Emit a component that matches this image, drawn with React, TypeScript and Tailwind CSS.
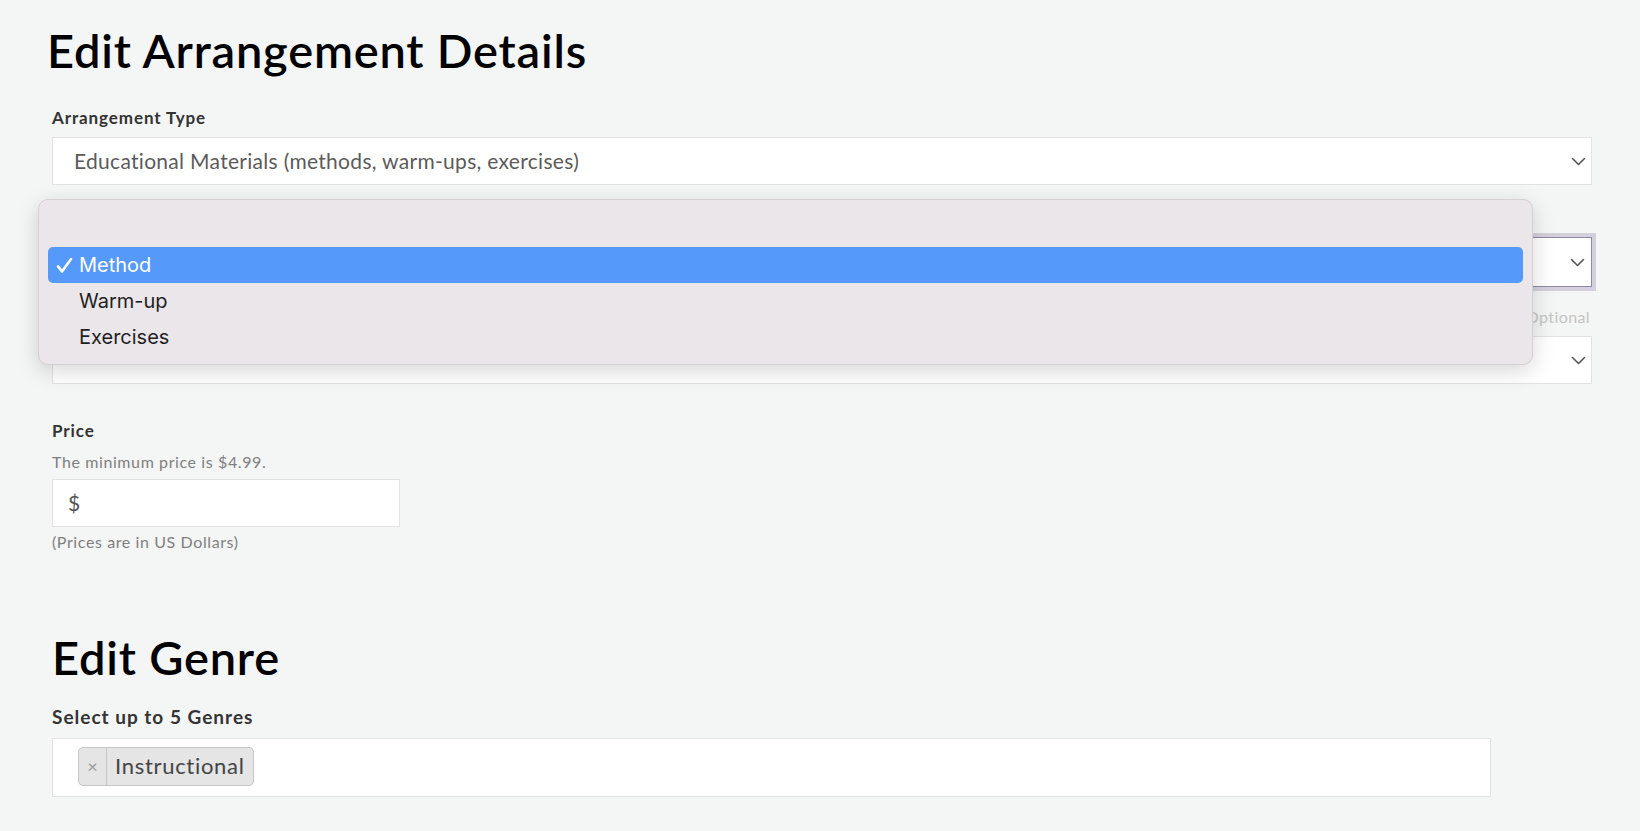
import React from 'react'

const Chevron = () => (
  <svg width="15" height="9" viewBox="0 0 15 9" fill="none" stroke="#555" strokeWidth="1.6" strokeLinecap="round" strokeLinejoin="round">
    <path d="M1.5 1.5l6 6 6-6" />
  </svg>
)

function SelectBox({ value, focused }: { value?: string; focused?: boolean }) {
  return (
    <div
      className={
        focused
          ? 'flex h-[50px] items-center justify-between border border-[#8f89a5] bg-white pl-[21px] pr-[6px] shadow-[0_0_0_4px_#d3cfdc]'
          : 'flex h-[48px] items-center justify-between border border-[#e2e2e2] bg-white pl-[21px] pr-[5px]'
      }
    >
      <span className="text-[21px] tracking-[0.3px] text-[#5b5b5b]">{value}</span>
      <Chevron />
    </div>
  )
}

const options = ['', 'Method', 'Warm-up', 'Exercises']

export default function App() {
  return (
    <div className="relative min-h-screen w-full overflow-hidden bg-[#f4f5f5] font-['Lato','Noto_Sans',sans-serif] text-[#111]">
      <div className="pl-[47px] pt-[22px]">
        <h1 className="text-[47px] font-semibold leading-[56px] tracking-[0.8px] text-black">Edit Arrangement Details</h1>
      </div>

      <div className="w-[1592px] pl-[52px]">
        <div className="mt-[30px]">
          <label className="block text-[17px] font-bold leading-[20px] tracking-[0.9px] text-[#333]">Arrangement Type</label>
          <div className="mt-[9px]">
            <SelectBox value="Educational Materials (methods, warm-ups, exercises)" />
          </div>
        </div>

        <div className="mt-[23px]">
          <div className="h-[20px]" />
          <div className="mt-[9px]">
            <SelectBox focused />
          </div>
        </div>

        <div className="mt-[20px]">
          <div className="flex h-[20px] items-end justify-end">
            <span className="pr-[2px] text-[16px] leading-[20px] tracking-[0.4px] text-[#c4c4c4]">Optional</span>
          </div>
          <div className="mt-[9px]">
            <SelectBox />
          </div>
        </div>

        <div className="mt-[37px]">
          <label className="block text-[17px] font-bold leading-[20px] tracking-[0.9px] text-[#333]">Price</label>
          <p className="mt-[11px] text-[16px] leading-[20px] tracking-[0.6px] text-[#808080]">The minimum price is $4.99.</p>
          <div className="mt-[7px] flex h-[48px] w-[348px] items-center border border-[#e2e2e2] bg-white pl-[15px]">
            <span className="text-[21px] text-[#555]">$</span>
          </div>
          <p className="mt-[5px] text-[16px] leading-[20px] tracking-[0.6px] text-[#808080]">(Prices are in US Dollars)</p>
        </div>

        <h2 className="mt-[77px] text-[47px] font-semibold leading-[56px] tracking-[0.8px] text-black">Edit Genre</h2>

        <div className="mt-[22px]">
          <label className="block text-[19px] font-bold leading-[20px] tracking-[1px] text-[#333]">Select up to 5 Genres</label>
          <div className="mt-[11px] flex h-[59px] w-[1439px] items-start border border-[#e2e2e2] bg-white pl-[25px] pt-[8px]">
            <div className="flex h-[39px] items-stretch rounded-[5px] border border-[#c6c6c6] bg-[#e5e5e5]">
              <span className="flex w-[28px] items-center justify-center border-r border-[#c6c6c6] pb-[1px] text-[18px] text-[#999]">×</span>
              <span className="flex items-center pb-[3px] pl-[8px] pr-[8px] text-[22px] tracking-[0.7px] text-[#444]">Instructional</span>
            </div>
          </div>
        </div>
      </div>

      <div className="absolute left-[38px] top-[199px] w-[1495px] rounded-[10px] border border-[#d3cfd2] bg-[#ebe6e9] px-[9px] pb-[9px] pt-[11px] font-['Inter','Noto_Sans',sans-serif] shadow-[0_6px_22px_rgba(0,0,0,0.16)]">
        {options.map((opt, i) => (
          <div
            key={i}
            className={
              opt === 'Method'
                ? 'flex h-[36px] items-center rounded-[5px] bg-[#5599fb] text-white'
                : 'flex h-[36px] items-center text-[#1f1f1f]'
            }
          >
            <span className="flex w-[31px] justify-center pl-[1px]">
              {opt === 'Method' && (
                <svg width="17" height="17" viewBox="0 0 17 17" fill="none" stroke="white" strokeWidth="2.6" strokeLinecap="round" strokeLinejoin="round">
                  <path d="M2 9.4l4 5L15 2" />
                </svg>
              )}
            </span>
            <span className="text-[20px]">{opt}</span>
          </div>
        ))}
      </div>
    </div>
  )
}
